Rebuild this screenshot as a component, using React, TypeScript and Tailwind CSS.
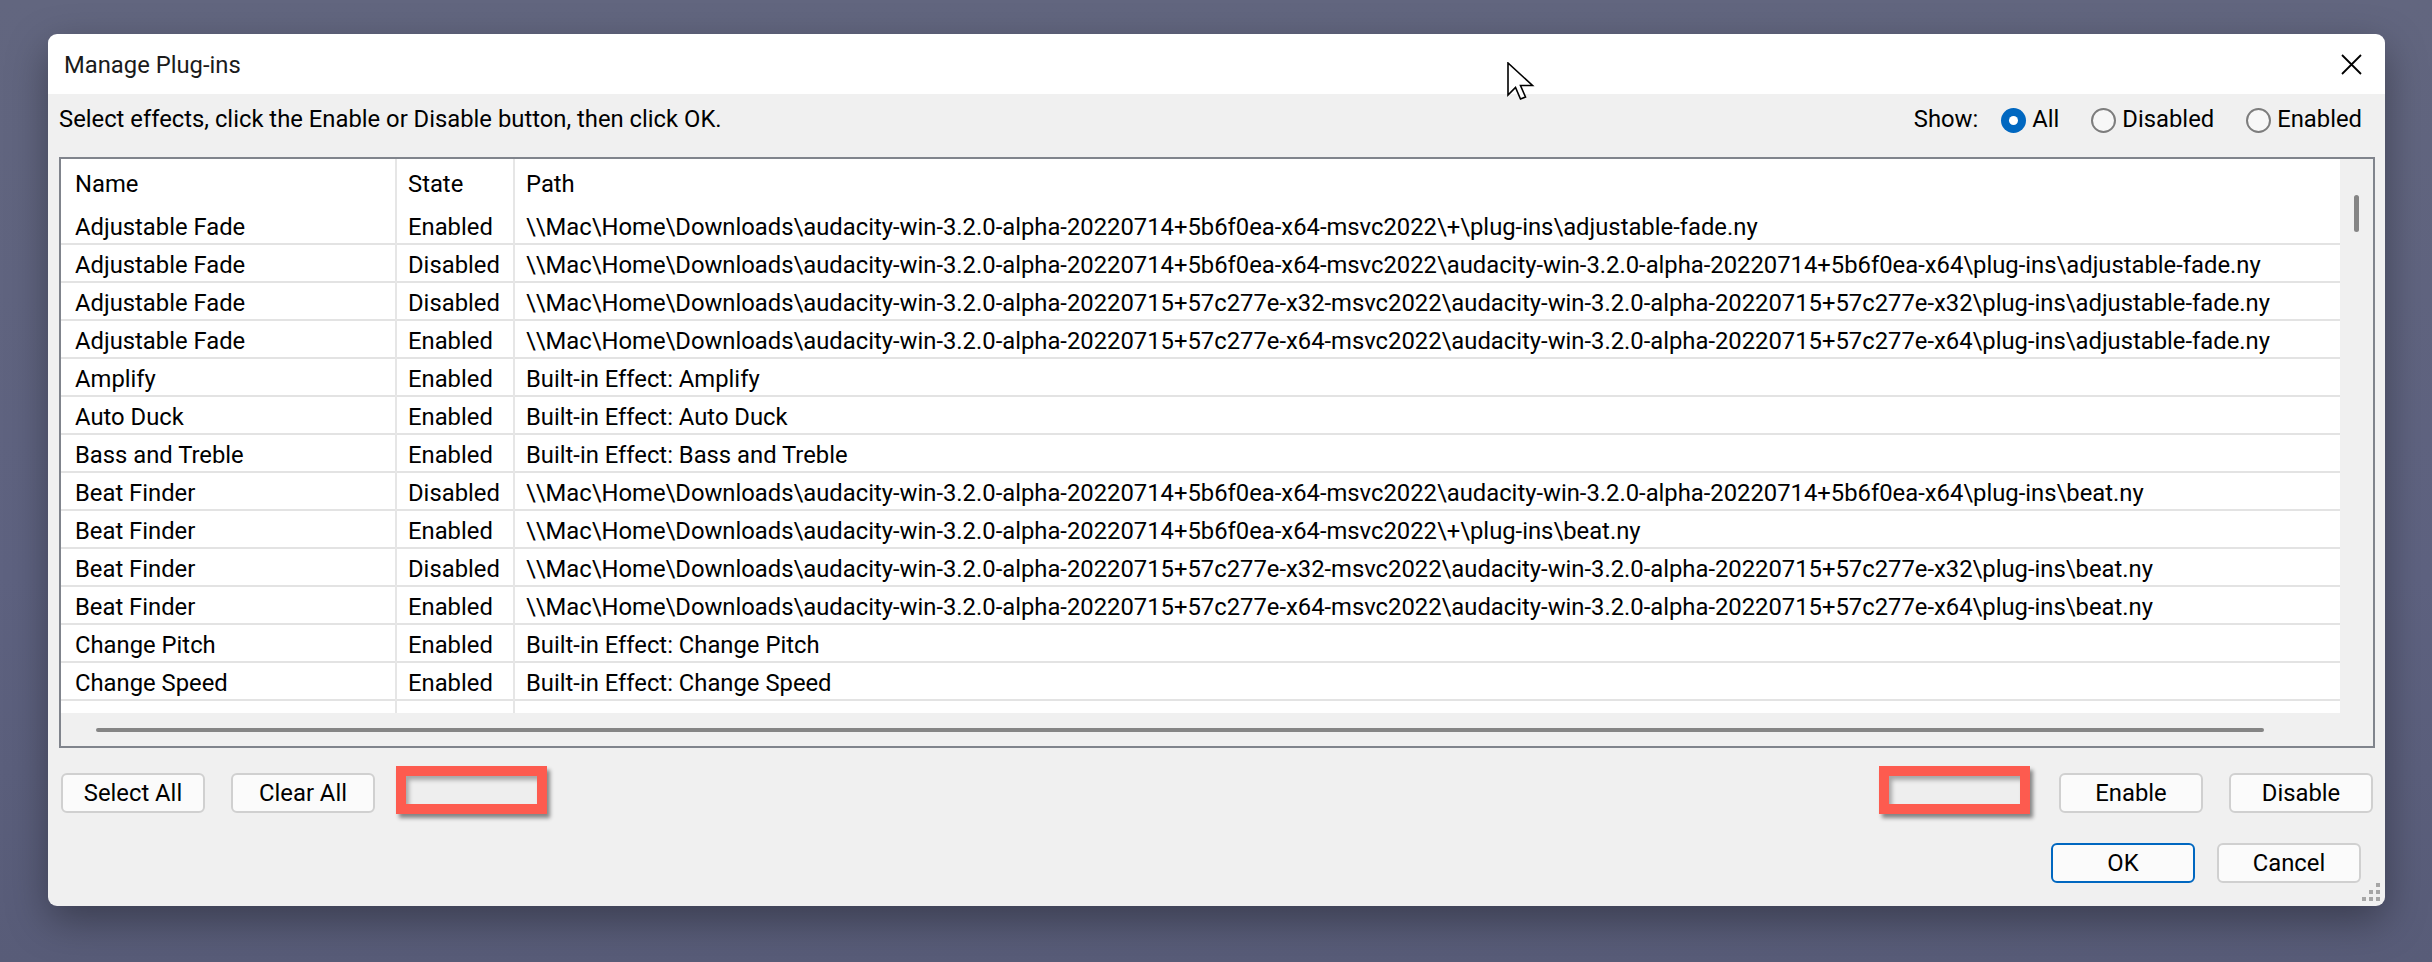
import React from "react";

const FONT = { fontFamily: "Roboto, 'Liberation Sans', sans-serif" };

const B = "\\";
const base = `${B}${B}Mac${B}Home${B}Downloads${B}`;
const a14 = "audacity-win-3.2.0-alpha-20220714+5b6f0ea-x64";
const a15x32 = "audacity-win-3.2.0-alpha-20220715+57c277e-x32";
const a15x64 = "audacity-win-3.2.0-alpha-20220715+57c277e-x64";

const rows: [string, string, string][] = [
  ["Adjustable Fade", "Enabled", `${base}${a14}-msvc2022${B}+${B}plug-ins${B}adjustable-fade.ny`],
  ["Adjustable Fade", "Disabled", `${base}${a14}-msvc2022${B}${a14}${B}plug-ins${B}adjustable-fade.ny`],
  ["Adjustable Fade", "Disabled", `${base}${a15x32}-msvc2022${B}${a15x32}${B}plug-ins${B}adjustable-fade.ny`],
  ["Adjustable Fade", "Enabled", `${base}${a15x64}-msvc2022${B}${a15x64}${B}plug-ins${B}adjustable-fade.ny`],
  ["Amplify", "Enabled", "Built-in Effect: Amplify"],
  ["Auto Duck", "Enabled", "Built-in Effect: Auto Duck"],
  ["Bass and Treble", "Enabled", "Built-in Effect: Bass and Treble"],
  ["Beat Finder", "Disabled", `${base}${a14}-msvc2022${B}${a14}${B}plug-ins${B}beat.ny`],
  ["Beat Finder", "Enabled", `${base}${a14}-msvc2022${B}+${B}plug-ins${B}beat.ny`],
  ["Beat Finder", "Disabled", `${base}${a15x32}-msvc2022${B}${a15x32}${B}plug-ins${B}beat.ny`],
  ["Beat Finder", "Enabled", `${base}${a15x64}-msvc2022${B}${a15x64}${B}plug-ins${B}beat.ny`],
  ["Change Pitch", "Enabled", "Built-in Effect: Change Pitch"],
  ["Change Speed", "Enabled", "Built-in Effect: Change Speed"],
];

function Btn({ label, primary = false }: { label: string; primary?: boolean }) {
  return (
    <div
      className={
        "flex h-[40px] w-[144px] items-center justify-center rounded-[6px] border-2 bg-[#fbfbfb] pt-[2px] text-[23.8px] text-black " +
        (primary ? "border-[#0067c0]" : "border-[#d0d0d0]")
      }
    >
      {label}
    </div>
  );
}

function Radio({ label, checked = false }: { label: string; checked?: boolean }) {
  return (
    <div className="flex items-center gap-[6px]">
      {checked ? (
        <div className="flex h-[25px] w-[25px] items-center justify-center rounded-full bg-[#0067c0]">
          <div className="h-[9px] w-[9px] rounded-full bg-white" />
        </div>
      ) : (
        <div className="h-[25px] w-[25px] rounded-full border-2 border-[#7d7d7d] bg-[#f7f7f7]" />
      )}
      <span>{label}</span>
    </div>
  );
}

function RedBox() {
  return (
    <div className="h-[48px] w-[151px] border-[10px] border-[#fd5b4f] bg-[#eeeeee] shadow-[3px_4px_4px_rgba(0,0,0,0.45),inset_3px_4px_4px_rgba(0,0,0,0.3)]" />
  );
}

export default function App() {
  return (
    <div
      style={FONT}
      className="relative h-[962px] w-[2432px] overflow-hidden bg-[linear-gradient(180deg,#62667f_0%,#5e6280_60%,#585c78_100%)] pl-[48px] pt-[34px]"
    >
      {/* window */}
      <div className="relative flex h-[872px] w-[2337px] flex-col overflow-hidden rounded-[9px] shadow-[0_14px_40px_rgba(0,0,0,0.35)]">
        {/* title bar */}
        <div className="flex h-[60px] items-center justify-between bg-white pl-[16px] pr-[23px]">
          <span className="pt-[3px] text-[23.8px] text-[#1b1b1b]">Manage Plug-ins</span>
          <svg width="21" height="21" viewBox="0 0 21 21">
            <path d="M1 1 L20 20 M20 1 L1 20" stroke="#000" strokeWidth="1.8" fill="none" />
          </svg>
        </div>

        {/* body */}
        <div className="relative flex flex-1 flex-col bg-[#f0f0f0] text-[23.8px] text-black">
          {/* instruction row */}
          <div className="flex h-[52px] items-center justify-between pl-[11px] pr-[23px]">
            <span>Select effects, click the Enable or Disable button, then click OK.</span>
            <div className="flex items-center">
              <span className="mr-[23px]">Show:</span>
              <div className="flex items-center gap-[32px]">
                <Radio label="All" checked />
                <Radio label="Disabled" />
                <Radio label="Enabled" />
              </div>
            </div>
          </div>

          {/* list */}
          <div className="ml-[11px] mr-[10px] mt-[11px] flex h-[591px] flex-col border-2 border-[#80848c] bg-[#f0f0f0]">
            <div className="flex h-[554px]">
              <div className="relative flex-1 overflow-hidden bg-white">
                {/* column separators */}
                <div className="absolute left-[334px] top-0 h-full w-[2px] bg-[#e6e6e6]" />
                <div className="absolute left-[452px] top-0 h-full w-[2px] bg-[#e6e6e6]" />
                <div className="flex h-[48px] items-center pt-[4px]">
                  <span className="w-[336px] pl-[14px]">Name</span>
                  <span className="w-[118px] pl-[11px]">State</span>
                  <span className="pl-[11px]">Path</span>
                </div>
                {rows.map(([n, s, p], i) => (
                  <div key={i} className="flex h-[38px] items-center whitespace-nowrap border-b-2 border-[#e3e3e3] pt-[5px]">
                    <span className="w-[336px] pl-[14px]">{n}</span>
                    <span className="w-[118px] pl-[11px]">{s}</span>
                    <span className="pl-[11px]">{p}</span>
                  </div>
                ))}
              </div>
              {/* vertical scrollbar */}
              <div className="w-[33px] bg-[#f0f0f0] pl-[14px] pt-[36px]">
                <div className="h-[37px] w-[5px] rounded-full bg-[#858585]" />
              </div>
            </div>
            {/* horizontal scrollbar */}
            <div className="flex flex-1 items-center pl-[35px]">
              <div className="h-[4px] w-[2168px] rounded-full bg-[#858585]" />
            </div>
          </div>

          {/* button row 1 */}
          <div className="mt-[18px] flex items-start justify-between pl-[13px] pr-[12px]">
            <div className="flex items-start">
              <div className="mt-[7px]">
                <Btn label="Select All" />
              </div>
              <div className="ml-[26px] mt-[7px]">
                <Btn label="Clear All" />
              </div>
              <div className="ml-[21px]">
                <RedBox />
              </div>
            </div>
            <div className="flex items-start">
              <RedBox />
              <div className="ml-[29px] mt-[7px]">
                <Btn label="Enable" />
              </div>
              <div className="ml-[26px] mt-[7px]">
                <Btn label="Disable" />
              </div>
            </div>
          </div>

          {/* button row 2 */}
          <div className="mt-[29px] flex justify-end gap-[22px] pr-[24px]">
            <Btn label="OK" primary />
            <Btn label="Cancel" />
          </div>

          {/* resize grip */}
          <svg className="absolute bottom-[5px] right-[5px]" width="18" height="18" viewBox="0 0 18 18">
            <rect x="14" y="0" width="4" height="4" fill="#a6a6a6" />
            <rect x="7" y="7" width="4" height="4" fill="#a6a6a6" />
            <rect x="14" y="7" width="4" height="4" fill="#a6a6a6" />
            <rect x="0" y="14" width="4" height="4" fill="#a6a6a6" />
            <rect x="7" y="14" width="4" height="4" fill="#a6a6a6" />
            <rect x="14" y="14" width="4" height="4" fill="#a6a6a6" />
          </svg>
        </div>
      </div>

      {/* mouse cursor */}
      <svg className="absolute left-[1507px] top-[62px]" width="30" height="40" viewBox="0 0 30 40">
        <path
          d="M1 1 L1 33 L8.5 25.5 L13.5 37 L18.5 35 L13.5 23.5 L25.5 23.5 Z"
          fill="#fff"
          stroke="#000"
          strokeWidth="1.6"
          strokeLinejoin="miter"
        />
      </svg>
    </div>
  );
}
